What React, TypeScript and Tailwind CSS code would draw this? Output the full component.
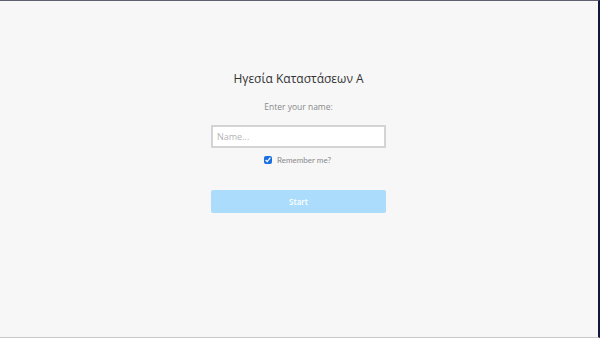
import React, { useState } from 'react';

const App = () => {
  const [name, setName] = useState('');
  const [remember, setRemember] = useState(true);

  return (
    <main
      className="w-[600px] h-[338px] bg-[#f7f7f8] border-t border-t-[#5f6170] border-r-2 border-r-[#16163a] border-b border-b-[#c9c9cc] flex flex-col items-center pt-[69px] pr-[1px]"
      style={{ fontFamily: '"Open Sans", "Noto Sans", sans-serif' }}
    >
      <h1 className="text-[12px] leading-[17px] text-[#333333]">Ηγεσία Καταστάσεων Α</h1>

      <p className="mt-[14px] text-[8.5px] leading-[12px] text-[#8a8a8a]">Enter your name:</p>

      <input
        type="text"
        value={name}
        onChange={(e) => setName(e.target.value)}
        placeholder="Name..."
        className="mt-[12px] w-[175px] h-[23px] bg-white border-2 border-[#d4d4d4] px-[4px] text-[9px] text-[#333] placeholder:text-[#b5b5b5] outline-none"
      />

      <label className="mt-[6px] h-[12px] flex items-center gap-[5px] text-[8px] text-[#8a8a8a] pr-[2px]">
        <input
          type="checkbox"
          checked={remember}
          onChange={(e) => setRemember(e.target.checked)}
          className="w-[8px] h-[8px] m-0 accent-[#1a6fe0]"
        />
        <span style={{ fontFamily: 'Lato, "Open Sans", sans-serif' }}>Remember me?</span>
      </label>

      <button className="mt-[24px] w-[175px] h-[23px] rounded-[2px] bg-[#abdcfb] text-white text-[8px] font-semibold">
        Start
      </button>
    </main>
  );
};

export default App;
